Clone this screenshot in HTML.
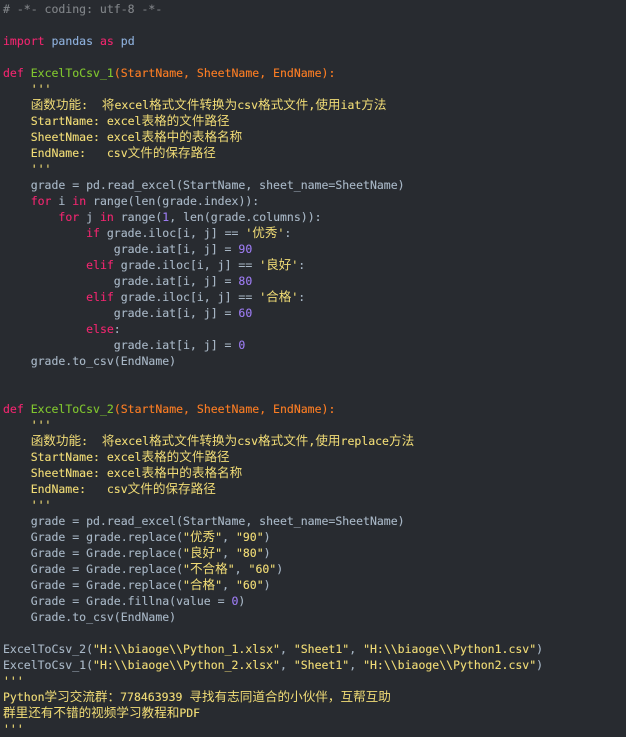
<!DOCTYPE html>
<html><head><meta charset="utf-8">
<style>
html,body{margin:0;padding:0;background:#282b30;}
body{width:626px;height:733px;overflow:hidden;position:relative;}
#c{position:absolute;left:3px;top:1px;font:11.5px/16px "DejaVu Sans Mono","Noto Sans CJK SC",monospace;color:#a8b7c6;-webkit-text-stroke:.12px currentColor;}
#c div{height:16px;white-space:pre;}
i{font:12.6px/0 "Noto Sans CJK SC","WenQuanYi Zen Hei",sans-serif;-webkit-text-stroke:0;}
.k{color:#f0266f}.f{color:#80c62f}.p{color:#fb7d24}.s{color:#f1dc76}.n{color:#9d7cf2}.c{color:#808488}.m{color:#8eb0dc}
</style></head><body><div id="c">
<div class="c"># -*- coding: utf-8 -*-</div>
<div></div>
<div><span class="k">import</span> <span class="m">pandas</span> <span class="k">as</span> <span class="m">pd</span></div>
<div></div>
<div><span class="k">def</span> <span class="f">ExcelToCsv_1</span><span class="p">(StartName, SheetName, EndName):</span></div>
<div class="s">    '''</div>
<div class="s">    <i>函数功能</i>:  <i>将</i>excel<i>格式文件转换为</i>csv<i>格式文件</i>,<i>使用</i>iat<i>方法</i></div>
<div class="s">    StartName: excel<i>表格的文件路径</i></div>
<div class="s">    SheetNmae: excel<i>表格中的表格名称</i></div>
<div class="s">    EndName:   csv<i>文件的保存路径</i></div>
<div class="s">    '''</div>
<div>    grade = pd.read_excel(StartName, sheet_name=SheetName)</div>
<div>    <span class="k">for</span> i <span class="k">in</span> range(len(grade.index)):</div>
<div>        <span class="k">for</span> j <span class="k">in</span> range(<span class="n">1</span>, len(grade.columns)):</div>
<div>            <span class="k">if</span> grade.iloc[i, j] == <span class="s">'<i>优秀</i>'</span>:</div>
<div>                grade.iat[i, j] = <span class="n">90</span></div>
<div>            <span class="k">elif</span> grade.iloc[i, j] == <span class="s">'<i>良好</i>'</span>:</div>
<div>                grade.iat[i, j] = <span class="n">80</span></div>
<div>            <span class="k">elif</span> grade.iloc[i, j] == <span class="s">'<i>合格</i>'</span>:</div>
<div>                grade.iat[i, j] = <span class="n">60</span></div>
<div>            <span class="k">else</span>:</div>
<div>                grade.iat[i, j] = <span class="n">0</span></div>
<div>    grade.to_csv(EndName)</div>
<div></div>
<div></div>
<div><span class="k">def</span> <span class="f">ExcelToCsv_2</span><span class="p">(StartName, SheetName, EndName):</span></div>
<div class="s">    '''</div>
<div class="s">    <i>函数功能</i>:  <i>将</i>excel<i>格式文件转换为</i>csv<i>格式文件</i>,<i>使用</i>replace<i>方法</i></div>
<div class="s">    StartName: excel<i>表格的文件路径</i></div>
<div class="s">    SheetNmae: excel<i>表格中的表格名称</i></div>
<div class="s">    EndName:   csv<i>文件的保存路径</i></div>
<div class="s">    '''</div>
<div>    grade = pd.read_excel(StartName, sheet_name=SheetName)</div>
<div>    Grade = grade.replace(<span class="s">"<i>优秀</i>"</span>, <span class="s">"90"</span>)</div>
<div>    Grade = Grade.replace(<span class="s">"<i>良好</i>"</span>, <span class="s">"80"</span>)</div>
<div>    Grade = Grade.replace(<span class="s">"<i>不合格</i>"</span>, <span class="s">"60"</span>)</div>
<div>    Grade = Grade.replace(<span class="s">"<i>合格</i>"</span>, <span class="s">"60"</span>)</div>
<div>    Grade = Grade.fillna(value = <span class="n">0</span>)</div>
<div>    Grade.to_csv(EndName)</div>
<div></div>
<div>ExcelToCsv_2(<span class="s">"H:\\biaoge\\Python_1.xlsx"</span>, <span class="s">"Sheet1"</span>, <span class="s">"H:\\biaoge\\Python1.csv"</span>)</div>
<div>ExcelToCsv_1(<span class="s">"H:\\biaoge\\Python_2.xlsx"</span>, <span class="s">"Sheet1"</span>, <span class="s">"H:\\biaoge\\Python2.csv"</span>)</div>
<div class="s">'''</div>
<div class="s">Python<i>学习交流群&#xFF1A;</i>778463939 <i>寻找有志同道合的小伙伴&#xFF0C;互帮互助</i></div>
<div class="s"><i>群里还有不错的视频学习教程和</i>PDF</div>
<div class="s">'''</div>
</div></body></html>
